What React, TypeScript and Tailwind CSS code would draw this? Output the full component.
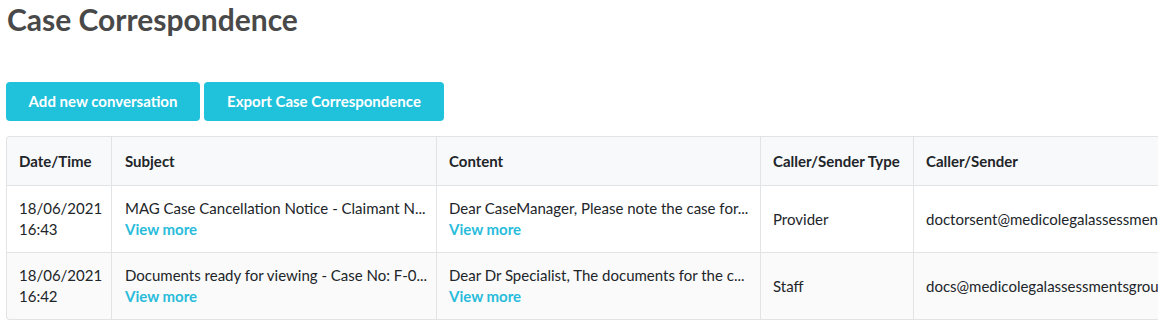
import React from "react";

const rows = [
  {
    date: "18/06/2021",
    time: "16:43",
    subject: "MAG Case Cancellation Notice - Claimant N...",
    content: "Dear CaseManager, Please note the case for...",
    type: "Provider",
    sender: "doctorsent@medicolegalassessmentsgroup.com.au",
    bg: "bg-white",
  },
  {
    date: "18/06/2021",
    time: "16:42",
    subject: "Documents ready for viewing - Case No: F-0...",
    content: "Dear Dr Specialist, The documents for the c...",
    type: "Staff",
    sender: "docs@medicolegalassessmentsgroup.com.au",
    bg: "bg-[#fafafa]",
  },
];

export default function App() {
  return (
    <div
      className="w-[1172px] h-[334px] bg-white text-[#212529] overflow-hidden"
      style={{ fontFamily: "Lato, 'Noto Sans', sans-serif" }}
    >
      <div className="pl-[6px]">
        <h1 className="text-[30px] font-bold leading-[38px] text-[#494949] pl-[1px]">
          Case Correspondence
        </h1>
        <div className="flex gap-[4px] mt-[44px]">
          <button className="h-[39px] w-[194px] rounded-[4px] bg-[#1fc1db] text-white text-[15px] font-bold">
            Add new conversation
          </button>
          <button className="h-[39px] w-[240px] rounded-[4px] bg-[#1fc1db] text-white text-[15px] font-bold">
            Export Case Correspondence
          </button>
        </div>
        <div className="mt-[15px] w-[1152px] overflow-hidden">
          <table className="w-[1400px] table-fixed border-separate border-spacing-0 text-[15px]">
            <colgroup>
              <col className="w-[105px]" />
              <col className="w-[325px]" />
              <col className="w-[324px]" />
              <col className="w-[153px]" />
              <col />
            </colgroup>
            <thead>
              <tr className="bg-[#f8f9fa]">
                <th className="h-[50px] px-[12px] text-left font-bold border-t border-l border-b border-[#e2e3e5] rounded-tl-[4px]">
                  Date/Time
                </th>
                <th className="px-[13px] text-left font-bold border-t border-l border-b border-[#e2e3e5]">
                  Subject
                </th>
                <th className="px-[12px] text-left font-bold border-t border-l border-b border-[#e2e3e5]">
                  Content
                </th>
                <th className="px-[12px] text-left font-bold border-t border-l border-b border-[#e2e3e5]">
                  Caller/Sender Type
                </th>
                <th className="px-[12px] text-left font-bold border-t border-l border-b border-[#e2e3e5]">
                  Caller/Sender
                </th>
              </tr>
            </thead>
            <tbody>
              {rows.map((r, i) => {
                const last = i === rows.length - 1;
                return (
                  <tr key={i} className={r.bg}>
                    <td
                      className={`h-[67px] px-[12px] align-middle leading-[21px] border-l border-b border-[#e2e3e5] ${
                        last ? "rounded-bl-[4px]" : ""
                      }`}
                    >
                      <div>{r.date}</div>
                      <div>{r.time}</div>
                    </td>
                    <td className="px-[13px] align-middle leading-[21px] border-l border-b border-[#e2e3e5]">
                      <div className="whitespace-nowrap">{r.subject}</div>
                      <div className="text-[#29bcdb] font-bold">View more</div>
                    </td>
                    <td className="px-[12px] align-middle leading-[21px] border-l border-b border-[#e2e3e5]">
                      <div className="whitespace-nowrap">{r.content}</div>
                      <div className="text-[#29bcdb] font-bold">View more</div>
                    </td>
                    <td className="px-[12px] align-middle leading-[21px] border-l border-b border-[#e2e3e5]">
                      {r.type}
                    </td>
                    <td className="px-[12px] align-middle leading-[21px] whitespace-nowrap border-l border-b border-[#e2e3e5]">
                      {r.sender}
                    </td>
                  </tr>
                );
              })}
            </tbody>
          </table>
        </div>
      </div>
    </div>
  );
}
